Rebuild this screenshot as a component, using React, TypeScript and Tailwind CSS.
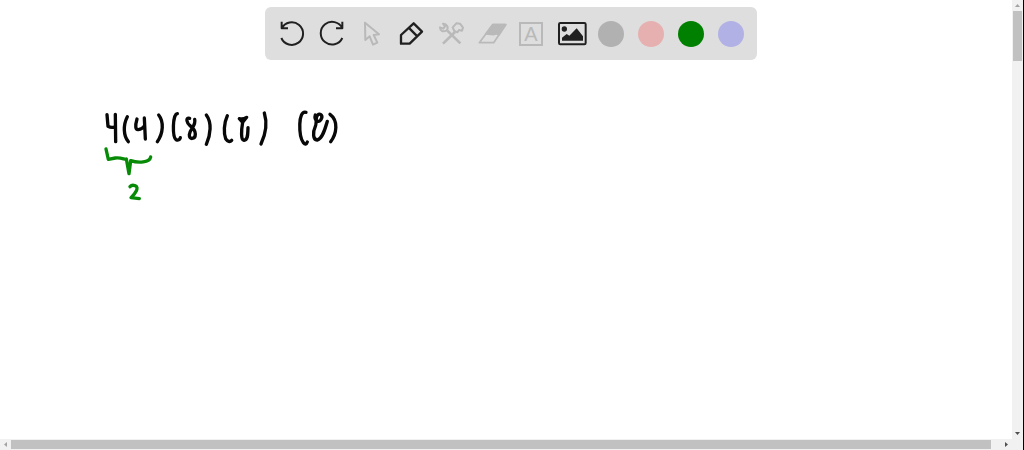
import type { ReactNode } from "react";

const swatches = [
  { name: "Gray", className: "bg-[#b1b1b1]" },
  { name: "Pink", className: "bg-[#e6b0b0]" },
  { name: "Green", className: "bg-[#008000]" },
  { name: "Lavender", className: "bg-[#b1b1e6]" },
];

function Tool({ label, muted, children }: { label: string; muted?: boolean; children: ReactNode }) {
  return (
    <button
      type="button"
      aria-label={label}
      className={`flex h-full w-10 items-center justify-center ${muted ? "text-[#b9b9b9]" : "text-[#202020]"}`}
    >
      {children}
    </button>
  );
}

function Icon({ children }: { children: ReactNode }) {
  return (
    <svg viewBox="0 0 120 159" className="h-full w-full" fill="none" stroke="currentColor" strokeWidth="6" strokeLinejoin="round">
      {children}
    </svg>
  );
}

function Toolbar() {
  return (
    <div role="toolbar" className="flex h-[53px] rounded-md bg-[#dedede] px-1.5">
      <Tool label="Undo">
        <Icon>
          <path d="M32 44V64H51M32 64A34 34 0 1 1 31 93" />
        </Icon>
      </Tool>
      <Tool label="Redo">
        <Icon>
          <path d="M94 44V64H75M94 64A34 34 0 1 0 94 93" />
        </Icon>
      </Tool>
      <Tool label="Select" muted>
        <Icon>
          <path d="M42 47L43 99L56 88L66 113L79 107L68 84L84 82Z" strokeWidth="6" />
        </Icon>
      </Tool>
      <Tool label="Pen">
        <Icon>
          <path d="M30 110V84L68 49L93 74L56 110ZM53 62L79 88" strokeWidth="7" />
        </Icon>
      </Tool>
      <Tool label="Tools" muted>
        <Icon>
          <path d="M36 50L42 58L37 65L27 61C27 71 35 76 46 71C55 63 47 49 36 50Z" />
          <path d="M49 71L88 109M72 75L36 110" strokeWidth="8" />
          <path d="M65 61L76 49L87 50L96 62L93 71L84 69L79 76L70 72Z" />
        </Icon>
      </Tool>
      <Tool label="Eraser" muted>
        <Icon>
          <path d="M25 107L65 53H104L68 107Z" strokeWidth="5" />
          <path d="M44 81L65 53H104L84 83Q76 78 68 83Z" fill="currentColor" strokeWidth="5" />
        </Icon>
      </Tool>
      <Tool label="Text" muted>
        <span className="flex h-6 w-6 items-center justify-center border-2 border-current font-['Liberation_Sans',sans-serif] text-xl leading-5">
          A
        </span>
      </Tool>
      <Tool label="Image">
        <Icon>
          <rect x="24" y="48" width="80" height="64" rx="4" />
          <circle cx="40" cy="66" r="8" fill="currentColor" stroke="none" />
          <path d="M33 101V92L47 81L55 86L77 64L96 88V101Z" fill="currentColor" stroke="none" />
        </Icon>
      </Tool>
      {swatches.map((swatch) => (
        <Tool key={swatch.name} label={swatch.name}>
          <span className={`h-[26px] w-[26px] rounded-full ${swatch.className}`} />
        </Tool>
      ))}
    </div>
  );
}

// Pen strokes, three units to the pixel
function Ink() {
  return (
    <svg
      role="img"
      aria-label="4(4)(8)(8) (8), 2 under the first pair"
      viewBox="0 0 750 330"
      className="mt-10 ml-[95px] h-[110px] w-[250px]"
      fill="none"
      strokeLinecap="round"
      strokeLinejoin="round"
    >
      <g stroke="#080808" strokeWidth="10">
        <path d="M36 44L39 79Q50 85 60 80M61 43L62 125" />
        <path d="M97 50C84 75 85 108 100 125" />
        <path d="M126 57C120 78 121 90 130 89Q142 88 149 77M148 54L151 117" />
        <path d="M191 45C207 65 205 100 187 125" />
        <path d="M247 41C232 43 232 111 243 119Q253 123 256 113" />
        <path d="M284 55C270 52 276 70 285 77C294 84 301 90 301 102C301 119 282 120 283 104C284 86 304 78 299 58" />
        <path d="M334 45C351 68 347 104 334 133" />
        <path d="M397 47C386 70 386 101 392 116Q402 130 410 121" />
        <path d="M433 56L443 67L455 52Q444 59 433 56M443 67C439 90 437 122 447 121C460 119 458 100 459 83" />
        <path d="M508 39C516 65 513 100 498 132" />
        <path d="M633 37C608 30 611 108 625 128Q633 137 637 126" />
        <path d="M661 45C657 59 668 71 677 60C686 48 676 37 668 45C660 54 666 64 662 76C652 98 654 121 667 120C682 117 690 88 697 64" />
        <path d="M705 43C731 62 725 102 707 125" />
      </g>
      <g stroke="#078b07" strokeWidth="10">
        <path d="M33 147L40 178L61 174C80 172 91 180 94 177L102 221L107 182C130 190 164 188 167 171" />
        <path d="M105 260Q111 253 120 257C134 262 121 281 108 293L133 296" />
      </g>
    </svg>
  );
}

function Arrow({ label, d, className }: { label: string; d: string; className: string }) {
  return (
    <button type="button" aria-label={label} className={`flex h-[11px] w-[11px] shrink-0 items-center justify-center ${className}`}>
      <svg viewBox="0 0 5 5" className="h-[5px] w-[5px]" fill="currentColor">
        <path d={d} />
      </svg>
    </button>
  );
}

export default function App() {
  return (
    <div className="flex h-screen overflow-hidden border-r border-black bg-white">
      <div className="flex min-w-0 flex-1 flex-col">
        <main className="flex-1 pt-[7px]">
          <div className="flex justify-center pl-2.5">
            <Toolbar />
          </div>
          <Ink />
        </main>
        <div className="flex h-[11px] items-center bg-[#f1f1f1]">
          <Arrow label="Scroll left" d="M4 0V5L1 2.5Z" className="text-[#a3a3a3]" />
          <div className="flex-1">
            <div className="h-[9px] w-[99%] bg-[#c1c1c1]" />
          </div>
          <Arrow label="Scroll right" d="M1 0V5L4 2.5Z" className="text-[#505050]" />
        </div>
      </div>
      <div className="flex w-[11px] flex-col items-center bg-[#f1f1f1] pb-[11px]">
        <Arrow label="Scroll up" d="M0 4H5L2.5 1Z" className="text-[#a3a3a3]" />
        <div className="w-full flex-1 px-px">
          <div className="h-[50px] bg-[#c1c1c1]" />
        </div>
        <Arrow label="Scroll down" d="M0 1H5L2.5 4Z" className="text-[#505050]" />
      </div>
    </div>
  );
}
